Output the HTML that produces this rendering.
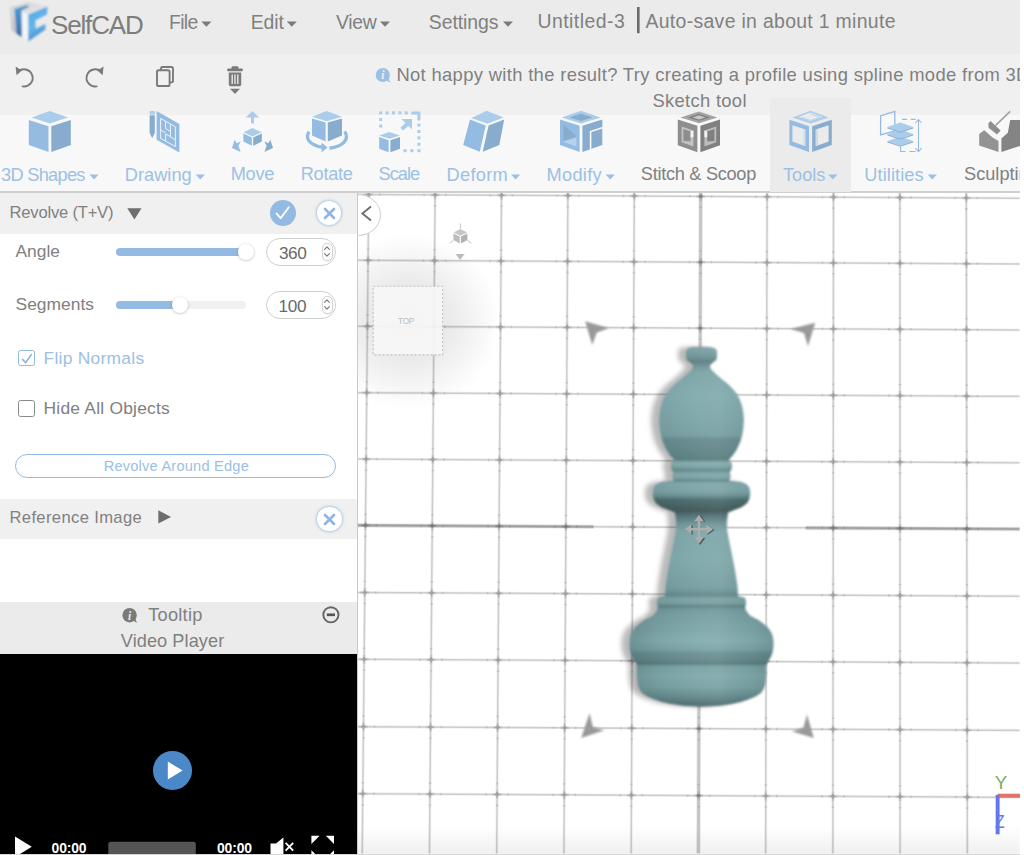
<!DOCTYPE html>
<html lang="en"><head><meta charset="utf-8"><title>SelfCAD</title>
<style>
html,body{margin:0;padding:0;background:#fff;}
body{width:1024px;height:855px;overflow:hidden;font-family:"Liberation Sans",sans-serif;}
#app{position:absolute;left:0;top:0;width:1020px;height:855px;overflow:hidden;background:#fff;}
.t{position:absolute;white-space:nowrap;line-height:1;}
.abs{position:absolute;}
#row1{position:absolute;left:0;top:0;width:1020px;height:54px;background:#ebebeb;}
#row2{position:absolute;left:0;top:54px;width:1020px;height:61px;background:#f0f0f0;}
#toolbar{position:absolute;left:0;top:114.5px;width:1020px;height:76.5px;background:#f8f8f9;}
#tbborder{position:absolute;left:0;top:190.7px;width:1020px;height:2.6px;background:#cfcfcf;}
#toolsactive{position:absolute;left:769.5px;top:97.5px;width:81.5px;height:94.3px;background:#ebebeb;}
#labels{position:absolute;left:0;top:0;width:1020px;height:855px;}
#clipline{position:absolute;left:0;top:54px;width:1020px;height:44px;overflow:hidden;}
#clipline .t{margin-top:-54px;}
#cliptb{position:absolute;left:0;top:150px;width:1020px;height:40px;overflow:hidden;}
#cliptb .t{margin-top:-150px;}
svg{position:absolute;overflow:visible;}
.closebtn{width:24.6px;height:24.6px;border-radius:50%;background:#fff;box-shadow:0 0 2.5px 1px rgba(146,186,226,.75);}
.thumb{width:15.4px;height:15.4px;border-radius:50%;background:#fff;box-shadow:0 0.5px 2.5px rgba(0,0,0,.28);}
.numbox{width:67.6px;height:25.8px;border:1.4px solid #cfcfcf;border-radius:15px;background:#fff;}
.spin{width:8.6px;height:15.8px;border:0.9px solid #d4d4d4;border-radius:5px;background:#fff;box-shadow:0 0.5px 1px rgba(0,0,0,.1);}

</style></head>
<body>
<div id="app">
<div id="row1"></div>
<div id="row2"></div>
<div id="toolbar"></div>
<div id="tbborder"></div>
<div id="toolsactive"></div>

<div id="icons">
<!-- logo -->
<svg style="left:0;top:0" width="60" height="50" viewBox="0 0 60 50">
  <defs>
    <linearGradient id="lgTop" x1="0" y1="0" x2="1" y2="1"><stop offset="0" stop-color="#c9c9c9"/><stop offset="1" stop-color="#f0f0f0"/></linearGradient>
    <linearGradient id="lgL" x1="0" y1="0" x2="0" y2="1"><stop offset="0" stop-color="#dcdcdc"/><stop offset="1" stop-color="#b4b4b4"/></linearGradient>
    <linearGradient id="lgB1" x1="0" y1="0" x2="0" y2="1"><stop offset="0" stop-color="#4f9ad6"/><stop offset=".55" stop-color="#3f86c2"/><stop offset="1" stop-color="#2f6ea6"/></linearGradient>
    <linearGradient id="lgB2" x1="0" y1="0" x2="0.3" y2="1"><stop offset="0" stop-color="#56a6e2"/><stop offset=".6" stop-color="#64b8ea"/><stop offset="1" stop-color="#4a8fd0"/></linearGradient>
    <filter id="lblur" x="-10%" y="-10%" width="120%" height="120%"><feGaussianBlur stdDeviation="0.9"/></filter>
  </defs>
  <g filter="url(#lblur)">
    <path d="M9.4 7.2L28.2 2.2L47.6 6.6L28.2 14.4Z" fill="url(#lgTop)"/>
    <path d="M9.4 7.2L28.2 14.4V41.6L11.8 30.4Z" fill="url(#lgL)"/>
    <path d="M21.6 11.4L28.2 14.4V41.6L21.9 37.4Z" fill="#f4f4f4"/>
    <path d="M14.4 8.9L27.6 5L28.4 7.4L21.3 10.4L22 37.3L16.6 33.6Z" fill="url(#lgB1)"/>
    <path d="M28.2 14.4L47.6 6.6L46.9 14.4L35.8 20.4V28.2L45.4 23.4V29.4L28.2 41.4Z" fill="url(#lgB2)"/>
    <path d="M35.8 20.4L45.6 16.8L45.4 23.4L35.8 28.2Z" fill="#ececec"/>
  </g>
</svg>
<!-- menu carets -->
<svg style="left:0;top:0" width="1020" height="54" viewBox="0 0 1020 54">
  <g fill="#7b7b7b">
    <path d="M201.4 21.6H211.4L206.4 26.8Z"/>
    <path d="M286.8 21.6H296.8L291.8 26.8Z"/>
    <path d="M380 21.6H390L385 26.8Z"/>
    <path d="M503 21.6H513L508 26.8Z"/>
  </g>
  <rect x="637" y="7" width="2.6" height="26.2" fill="#6a6a6a"/>
</svg>
<!-- row2 icons -->
<svg style="left:0;top:54px" width="1020" height="61" viewBox="0 54 1020 61">
  <g fill="none" stroke="#7a7a7a" stroke-width="1.9" stroke-linecap="round" stroke-linejoin="round">
    <!-- undo -->
    <path d="M17.6 72.2A8.6 8.6 0 1 1 22.6 86.4"/>
    <!-- redo -->
    <path d="M101.6 72.2A8.6 8.6 0 1 0 96.6 86.4"/>
    <!-- copy -->
    <rect x="157" y="70.2" width="12.6" height="15.8" rx="1.6"/>
    <path d="M161 70V68.4Q161 67 162.4 67H171.6Q173 67 173 68.4V81Q173 82.4 171.6 82.4H170"/>
  </g>
  <path d="M15.6 66.4L21.8 70.6L16.6 75.2Z M103.6 66.4L97.4 70.6L102.6 75.2Z" fill="#7a7a7a"/>
  <!-- trash -->
  <g fill="#7a7a7a">
    <rect x="227.2" y="68.6" width="15.6" height="2.6" rx="0.8"/>
    <rect x="231.6" y="66.2" width="6.8" height="3" rx="1"/>
    <path d="M228.8 72.4H241.2V84.6Q241.2 86.2 239.6 86.2H230.4Q228.8 86.2 228.8 84.6Z"/>
    <path d="M230 88.8H240L235 94Z"/>
  </g>
  <g stroke="#f0f0f0" stroke-width="1.3"><path d="M232.2 74.4V84M235 74.4V84M237.8 74.4V84"/></g>
  <!-- info -->
  <circle cx="382.8" cy="75" r="7.1" fill="#9cc0e4"/>
  <path d="M386.4 80Q388.6 82.6 390.8 82.4Q388.8 81 388.8 78Z" fill="#9cc0e4"/>
  <text x="382.9" y="79.4" text-anchor="middle" font-family="Liberation Serif, serif" font-style="italic" font-weight="bold" font-size="11.5" fill="#f0f0f0">i</text>
</svg>
<!-- toolbar carets -->
<svg style="left:0;top:160px" width="1020" height="30" viewBox="0 160 1020 30">
  <g fill="#9cc0e4">
    <path d="M89.5 174.6H98.7L94.1 179.4Z"/>
    <path d="M195.7 174.6H204.9L200.3 179.4Z"/>
    <path d="M511 174.6H520.2L515.6 179.4Z"/>
    <path d="M605.6 174.6H614.8L610.2 179.4Z"/>
    <path d="M828.2 174.6H837.4L832.8 179.4Z"/>
    <path d="M927.7 174.6H936.9L932.3 179.4Z"/>
  </g>
</svg>
<!-- toolbar icons -->
<svg id="tbicons" style="left:0;top:105px" width="1020" height="55" viewBox="0 105 1020 55">
  <!-- 3D Shapes cube -->
  <path d="M49.6 111.1L68.1 117.5L49.6 123.4L31.6 117.5Z" fill="#aacdec"/>
  <path d="M28.8 119.9L48.5 126.3V152L28.8 145Z" fill="#94bbe2"/>
  <path d="M51.3 126.3L70.8 119.9V145L51.3 152Z" fill="#88acce"/>
  <!-- Drawing -->
  <path d="M149.6 114.6V112.2Q149.6 111 150.8 111H153.6Q154.8 111 154.8 112.2V114.6Z" fill="#aacdec"/>
  <path d="M149.6 115.2H154.8V133L152.2 138.2L149.6 133Z" fill="#88acce"/>
  <path d="M156.6 111L179.4 124V152.4L156.6 139.8Z" fill="#94bbe2"/>
  <g fill="none" stroke="#f8f8f9" stroke-width="0.9">
    <path d="M160.6 118.4L175.4 126.8V146.6L160.6 138.4Z"/>
    <path d="M165.6 121.4V128.6L170.4 131.4M170.4 124.2V136.6M160.6 130L165.6 132.8M170.4 136.6L165.6 134V141.2M170.4 137L175.4 139.8"/>
  </g>
  <!-- Move -->
  <path d="M252.4 111L259.4 117.6H254V123.4H251V117.6H245.6Z" fill="#aacdec"/>
  <path d="M252.5 128L261.6 132.3L252.5 136.4L243.6 132.3Z" fill="#aacdec"/>
  <path d="M243.4 133.6L251.8 137.4V145.8L243.4 141.6Z" fill="#94bbe2"/>
  <path d="M253.2 137.4L261.8 133.6V141.6L253.2 145.8Z" fill="#88acce"/>
  <path d="M232 148L234.6 139.8L236.6 143.2L240.6 141.6L238.4 145.8L240.6 152Z" fill="#94bbe2"/>
  <path d="M273 148L270.4 139.8L268.4 143.2L264.4 141.6L266.6 145.8L264.4 152Z" fill="#88acce"/>
  <!-- Rotate -->
  <path d="M326.6 111L342 116.8L326.6 121.2L312 116.8Z" fill="#aacdec"/>
  <path d="M312 118.6L325.6 122.6V141.6L312 135.6Z" fill="#94bbe2"/>
  <path d="M327.8 122.6L342 118.6V135.6L327.8 141.6Z" fill="#88acce"/>
  <path d="M309 131.6Q304.6 138.6 312 143.6Q317 146.8 324 147.4" fill="none" stroke="#94bbe2" stroke-width="3.2"/>
  <path d="M321.6 142.4L327.6 147.4L321.6 152.2Z" fill="#94bbe2"/>
  <path d="M329.4 148.2Q340 147 344.6 141.6Q348.4 136.4 344.6 131.4" fill="none" stroke="#94bbe2" stroke-width="3.2"/>
  <!-- Scale -->
  <g fill="#aacdec">
    <rect x="379.2" y="111.4" width="3" height="3"/><rect x="385.6" y="111.4" width="3" height="3"/><rect x="392" y="111.4" width="3" height="3"/><rect x="398.4" y="111.4" width="3" height="3"/><rect x="404.8" y="111.4" width="3" height="3"/>
    <path d="M411.4 111.4H420.4V120.4H417.4V114.4H411.4Z"/>
    <rect x="379.2" y="118" width="3" height="3"/><rect x="379.2" y="124.6" width="3" height="3"/>
    <rect x="417.4" y="123.6" width="3" height="3"/><rect x="417.4" y="130" width="3" height="3"/><rect x="417.4" y="136.4" width="3" height="3"/><rect x="417.4" y="142.8" width="3" height="3"/><rect x="417.4" y="149.2" width="3" height="3"/>
    <rect x="403.6" y="149.2" width="3" height="3"/><rect x="410.4" y="149.2" width="3" height="3"/>
    <path d="M401.2 119H412V129.6L408.4 126L403 130.6L400.4 127.8L405.4 122.8Z"/>
  </g>
  <path d="M389.4 132L400 135.4L389.4 138.8L379.2 135.4Z" fill="#aacdec"/>
  <path d="M379.2 137L388.6 140.2V152.3L379.2 148.8Z" fill="#94bbe2"/>
  <path d="M390.4 140.2L400 137V148.8L390.4 152.3Z" fill="#88acce"/>
  <!-- Deform -->
  <path d="M471.4 118L486.6 110.8L503.8 117.6L487.4 123.8Z" fill="#aacdec"/>
  <path d="M470 119.6L485.7 125.6L479.8 151.8L463.2 145Z" fill="#94bbe2"/>
  <path d="M488.6 125.6L504.2 119.6L499.3 145L482.7 151.8Z" fill="#88acce"/>
  <!-- Modify -->
  <path d="M581 110.8L600.8 117.4L581 123.6L561.6 117.4Z" fill="#aacdec"/>
  <path d="M581 113.4L592.6 117.4L581 121L569.6 117.4Z" fill="#88acce"/>
  <path d="M560 119.6L579.6 125.8V152L560 145Z" fill="#94bbe2"/>
  <path d="M563.4 124.4L576.4 136.2L563.4 140.6Z" fill="#88acce"/>
  <path d="M563.4 141.8L576.4 137.4V146.6Z" fill="#b4d3ee"/>
  <path d="M582.4 125.8L602.3 119.6V145L582.4 152Z" fill="#88acce"/>
  <path d="M602.3 127.8L590.6 131.6V149.6" fill="none" stroke="#f8f8f9" stroke-width="1.6"/>
  <!-- Stitch & Scoop -->
  <g>
    <path d="M699 111.4L717.4 117.4L699 123.2L680.4 117.4Z" fill="#a4a4a4"/>
    <path d="M699 113.8L710 117.4L699 120.8L688 117.4Z" fill="#7e7e7e"/>
    <path d="M699 115.2L705.6 117.4L699 119.6L692.4 117.4Z" fill="#c9c9c9"/>
    <path d="M677.8 119.6L697.4 125.8V152.2L677.8 145.2Z" fill="#8e8e8e"/>
    <path d="M681.6 126.6L693.4 130.4V146.4L681.6 142.2Z" fill="#c4c4c4"/>
    <path d="M683.4 129L690.6 131.4V141.4L683.4 141Z" fill="#8e8e8e"/>
    <path d="M690.6 131.4L693.4 130.4V137L690.6 137.6Z" fill="#f4f4f4"/>
    <path d="M700.4 125.8L720 119.6V145.2L700.4 152.2Z" fill="#808080"/>
    <path d="M704.4 130.4L716.2 126.6V142.2L704.4 146.4Z" fill="#bdbdbd"/>
    <path d="M707.2 131.4L714.4 129V141L707.2 141.4Z" fill="#808080"/>
    <path d="M704.4 130.4L707.2 131.4V137.6L704.4 137Z" fill="#f4f4f4"/>
  </g>
  <!-- Tools -->
  <path d="M810.6 110.8L828.4 117.4L810.6 123.4L792.4 117.4Z" fill="#aacdec"/>
  <path d="M810.6 112.6L822.6 117L810.6 121L798.4 117Z" fill="#ebebeb"/>
  <path d="M810.6 113.8L820 117.4L810.6 120.4L801.2 117.4" fill="none" stroke="#aacdec" stroke-width="0.8"/>
  <path d="M789.4 119.8L809 126.2V152L789.4 145Z" fill="#94bbe2"/>
  <path d="M792.4 125.2L805.4 129.6V146.2L792.4 141.6Z" fill="#ebebeb"/>
  <path d="M804 129.4V145.4" stroke="#b8d4ee" stroke-width="0.9"/>
  <path d="M812.2 126.2L831.8 119.8V145L812.2 152Z" fill="#88acce"/>
  <path d="M815.6 129.6L828.6 125.2V141.6L815.6 146.2Z" fill="#ebebeb"/>
  <path d="M817 129.4V145.4" stroke="#a9c6e2" stroke-width="0.9"/>
  <!-- Utilities -->
  <path d="M880.6 115.8L894.8 111.5V131L880.6 134.9Z" fill="none" stroke="#94bbe2" stroke-width="1.3"/>
  <g fill="#aacdec">
    <path d="M900.4 122.4L913.2 127L900.4 131.4L887.4 127Z"/>
    <path d="M900.4 129.6L913.2 134L900.4 138.4L887.4 134Z"/>
    <path d="M900.4 136.6L913.2 141L900.4 145.4L887.4 141Z"/>
  </g>
  <g fill="#8fb5da">
    <path d="M887.4 127L900.4 131.4L913.2 127V128.4L900.4 132.8L887.4 128.4Z"/>
    <path d="M887.4 134L900.4 138.4L913.2 134V135.4L900.4 139.8L887.4 135.4Z"/>
    <path d="M887.4 141L900.4 145.4L913.2 141V142.4L900.4 146.8L887.4 142.4Z"/>
  </g>
  <g fill="none" stroke="#94bbe2" stroke-width="1.1">
    <path d="M902 119.4H907M910.6 119.4H915.6"/>
    <path d="M900.6 146.4V151.5H905.6M909.4 151.5H915.6"/>
    <path d="M918.5 120V151"/>
    <path d="M915.4 123L918.5 119.6L921.6 123M915.4 148.2L918.5 151.6L921.6 148.2"/>
  </g>
  <!-- Sculpting -->
  <g fill="#8a8a8a">
    <path d="M979.2 134L984.2 130.2L992.6 137.4L998.5 141V152L979.2 145.6Z" fill="#939393"/>
    <path d="M1001.4 138.6L1007.8 132.7L1010.2 120H1021V145.6L1001.4 152Z" fill="#848484"/>
    <path d="M988.4 123.4L990.6 121L1000.6 130.4L997 134.6L988.6 127.8Z" fill="#8e8e8e"/>
  </g>
  <path d="M995.6 125.4L1010.2 111.4" stroke="#a0a0a0" stroke-width="1.5"/>
</svg>
</div>

<div id="panel">
  <div class="abs" style="left:0;top:193.3px;width:357px;height:40.4px;background:#f0f0f0;"></div>
  <!-- header triangle -->
  <svg style="left:127px;top:208px" width="15" height="12" viewBox="0 0 15 12"><path d="M0.3 0.2H14.5L7.4 11.6Z" fill="#6e6e6e"/></svg>
  <!-- confirm button -->
  <div class="abs" style="left:269.8px;top:200.3px;width:25.8px;height:25.8px;border-radius:50%;background:#92bae2;"></div>
  <svg style="left:269.8px;top:200.3px" width="26" height="26" viewBox="0 0 26 26"><path d="M6.6 13.6L10.6 18.2L18.8 7.2" fill="none" stroke="#fff" stroke-width="1.9" stroke-linecap="round" stroke-linejoin="round"/></svg>
  <!-- close button -->
  <div class="abs closebtn" style="left:316.6px;top:200.6px;"></div>
  <svg style="left:316.6px;top:200.6px" width="25" height="25" viewBox="0 0 25 25"><path d="M8 8L17 17M17 8L8 17" fill="none" stroke="#8db7e2" stroke-width="2.6" stroke-linecap="round"/></svg>

  <!-- slider 1 -->
  <div class="abs" style="left:115.5px;top:248px;width:136px;height:8px;border-radius:4px;background:#92bae2;"></div>
  <div class="abs thumb" style="left:238.4px;top:244.4px;"></div>
  <div class="abs numbox" style="left:266.2px;top:238.3px;"></div>
  <div class="abs spin" style="left:322.4px;top:243.4px;"></div>
  <svg style="left:322.4px;top:243.4px" width="10" height="17" viewBox="0 0 10 17"><path d="M2.6 6.4L5 3.8L7.4 6.4M2.6 10.6L5 13.2L7.4 10.6" fill="none" stroke="#777" stroke-width="1.1" stroke-linecap="round" stroke-linejoin="round"/></svg>
  <!-- slider 2 -->
  <div class="abs" style="left:115.5px;top:301px;width:130px;height:8px;border-radius:4px;background:#f0f0f0;"></div>
  <div class="abs" style="left:115.5px;top:301px;width:66px;height:8px;border-radius:4px;background:#92bae2;"></div>
  <div class="abs thumb" style="left:172.4px;top:297.4px;"></div>
  <div class="abs numbox" style="left:266.2px;top:291.3px;"></div>
  <div class="abs spin" style="left:322.4px;top:296.4px;"></div>
  <svg style="left:322.4px;top:296.4px" width="10" height="17" viewBox="0 0 10 17"><path d="M2.6 6.4L5 3.8L7.4 6.4M2.6 10.6L5 13.2L7.4 10.6" fill="none" stroke="#777" stroke-width="1.1" stroke-linecap="round" stroke-linejoin="round"/></svg>

  <!-- checkbox 1 -->
  <div class="abs" style="left:18px;top:349.5px;width:14.5px;height:14.5px;border:1.6px solid #92bae2;border-radius:2.5px;background:#fff;"></div>
  <svg style="left:18px;top:349.5px" width="18" height="18" viewBox="0 0 18 18"><path d="M4.6 9.4L7.6 12.8L13.2 4.8" fill="none" stroke="#8db7e2" stroke-width="1.7" stroke-linecap="round" stroke-linejoin="round"/></svg>
  <!-- checkbox 2 -->
  <div class="abs" style="left:18px;top:400px;width:14.5px;height:14.5px;border:1.6px solid #8a8a8a;border-radius:2.5px;background:#fff;"></div>

  <!-- revolve around edge -->
  <div class="abs" style="left:14.8px;top:454px;width:319.4px;height:22px;border:1.4px solid #92bae2;border-radius:13px;background:#fff;"></div>

  <!-- reference image -->
  <div class="abs" style="left:0;top:499px;width:357px;height:39.5px;background:#f0f0f0;"></div>
  <svg style="left:158px;top:510px" width="14" height="14" viewBox="0 0 14 14"><path d="M0.3 0.2V13.6L13 6.9Z" fill="#6e6e6e"/></svg>
  <div class="abs closebtn" style="left:317px;top:506.5px;"></div>
  <svg style="left:317px;top:506.5px" width="25" height="25" viewBox="0 0 25 25"><path d="M8 8L17 17M17 8L8 17" fill="none" stroke="#8db7e2" stroke-width="2.6" stroke-linecap="round"/></svg>

  <!-- tooltip bar -->
  <div class="abs" style="left:0;top:602.2px;width:357px;height:51.8px;background:#ebebeb;"></div>
  <svg style="left:122.3px;top:608.3px" width="16" height="16" viewBox="0 0 16 16"><circle cx="7.6" cy="7.2" r="7.2" fill="#7a7a7a"/><path d="M11 12.2Q13.5 14.8 15.6 14.6Q13.6 13.4 13.4 10.4Z" fill="#7a7a7a"/><text x="7.7" y="11.6" text-anchor="middle" font-family="Liberation Serif, serif" font-style="italic" font-weight="bold" font-size="11.5" fill="#ebebeb">i</text></svg>
  <svg style="left:322.2px;top:606.4px" width="18" height="18" viewBox="0 0 18 18"><circle cx="8.9" cy="8.8" r="7.6" fill="none" stroke="#666" stroke-width="1.9"/><path d="M4.8 8.8H13" stroke="#555" stroke-width="2.7"/></svg>

  <!-- video -->
  <div class="abs" style="left:0;top:654px;width:357px;height:199.7px;background:#000;"></div>
  <div class="abs" style="left:153px;top:751px;width:38.6px;height:38.6px;border-radius:50%;background:#4b88c7;"></div>
  <svg style="left:153px;top:751px" width="39" height="39" viewBox="0 0 39 39"><path d="M14.8 10.6V28.4L29.6 19.5Z" fill="#fff"/></svg>
  <div id="vclip" class="abs" style="left:0;top:830px;width:357px;height:23.7px;overflow:hidden;">
    <svg style="left:0;top:0" width="357" height="40" viewBox="0 830 357 40">
      <path d="M15 836.6V857L31.8 846.8Z" fill="#fff"/>
      <rect x="108.3" y="841.7" width="87.5" height="14" rx="2.5" fill="#555"/>
      <path d="M270.5 843.5H276L283.4 837.6V858H276H270.5Z" fill="#fff"/>
      <path d="M285.6 842.8L293.2 850.6M293.2 842.8L285.6 850.6" stroke="#fff" stroke-width="1.8" fill="none"/>
      <path d="M311.4 835.8H319.6L311.4 844Z M334 835.8H325.8L334 844Z M311.4 858.4H319.6L311.4 850.2Z M334 858.4H325.8L334 850.2Z" fill="#fff"/>
    </svg>
  </div>
  <div class="abs" style="left:0;top:853.7px;width:1020px;height:1.3px;background:#d6d6d6;"></div>
  <!-- panel right border -->
  <div class="abs" style="left:356.8px;top:193.3px;width:1.6px;height:661px;background:#c9c9c9;"></div>
</div>

<div id="viewport" class="abs" style="left:358.4px;top:193.3px;width:661.6px;height:660.4000000000001px;overflow:hidden;background:#fff;">
<svg style="left:0;top:0" width="661.6" height="660.4000000000001" viewBox="358.4 193.3 661.6 660.4000000000001">
<defs>
<radialGradient id="vcsh" cx="0.5" cy="0.5" r="0.5"><stop offset="0" stop-color="#000" stop-opacity="0.115"/><stop offset="0.45" stop-color="#000" stop-opacity="0.08"/><stop offset="1" stop-color="#000" stop-opacity="0"/></radialGradient>
<linearGradient id="botfade" x1="0" y1="0" x2="0" y2="1"><stop offset="0" stop-color="#000" stop-opacity="0"/><stop offset="1" stop-color="#000" stop-opacity="0.06"/></linearGradient>
<filter id="gblur" x="-5%" y="-5%" width="110%" height="110%"><feGaussianBlur stdDeviation="1"/></filter>
<filter id="ablur" x="-20%" y="-20%" width="140%" height="140%"><feGaussianBlur stdDeviation="1"/></filter>
<filter id="shblur" x="-30%" y="-10%" width="160%" height="120%"><feGaussianBlur stdDeviation="2.4"/></filter>
<filter id="bblur" x="-5%" y="-5%" width="110%" height="110%"><feGaussianBlur stdDeviation="1"/></filter>
</defs>
<g>
<path d="M358.40 194.77L1020.00 198.47M358.40 260.57L1020.00 264.27M358.40 326.57L1020.00 330.27M358.40 392.97L1020.00 396.67M358.40 459.37L1020.00 463.07M358.40 525.67L1020.00 529.37M358.40 592.77L1020.00 596.47M358.40 659.57L1020.00 663.27M358.40 726.97L1020.00 730.67M358.40 793.97L1020.00 797.67M369.12 193.30L362.62 853.70M435.51 193.30L429.85 853.70M501.91 193.30L497.09 853.70M568.31 193.30L564.33 853.70M634.71 193.30L631.56 853.70M767.50 193.30L766.04 853.70M833.90 193.30L833.27 853.70M900.30 193.30L900.51 853.70M966.70 193.30L967.75 853.70" fill="none" stroke="#000" stroke-opacity="0.055" stroke-width="3.1"/>
<path d="M358.40 194.77L1020.00 198.47M358.40 260.57L1020.00 264.27M358.40 326.57L1020.00 330.27M358.40 392.97L1020.00 396.67M358.40 459.37L1020.00 463.07M358.40 525.67L1020.00 529.37M358.40 592.77L1020.00 596.47M358.40 659.57L1020.00 663.27M358.40 726.97L1020.00 730.67M358.40 793.97L1020.00 797.67M369.12 193.30L362.62 853.70M435.51 193.30L429.85 853.70M501.91 193.30L497.09 853.70M568.31 193.30L564.33 853.70M634.71 193.30L631.56 853.70M767.50 193.30L766.04 853.70M833.90 193.30L833.27 853.70M900.30 193.30L900.51 853.70M966.70 193.30L967.75 853.70" fill="none" stroke="#000" stroke-opacity="0.15" stroke-width="1.5"/>
<path d="M701.11 193.30L698.80 853.70M358.40 525.67L594.00 526.99M806.00 528.17L1020.00 529.37" fill="none" stroke="#000" stroke-opacity="0.06" stroke-width="4.8"/>
<path d="M701.11 193.30L698.80 853.70M358.40 525.67L594.00 526.99M806.00 528.17L1020.00 529.37" fill="none" stroke="#000" stroke-opacity="0.17" stroke-width="3.1"/>
<path d="M364.5 194.8H373.7M369.1 190.2V199.4M430.9 195.2H440.1M435.5 190.6V199.8M497.3 195.6H506.5M501.9 191.0V200.2M563.7 195.9H572.9M568.3 191.3V200.5M630.1 196.3H639.3M634.7 191.7V200.9M696.5 196.7H705.7M701.1 192.1V201.3M762.9 197.1H772.1M767.5 192.5V201.7M829.3 197.4H838.5M833.9 192.8V202.0M895.7 197.8H904.9M900.3 193.2V202.4M962.1 198.2H971.3M966.7 193.6V202.8M363.9 260.6H373.1M368.5 256.0V265.2M430.3 261.0H439.5M434.9 256.4V265.6M496.8 261.4H506.0M501.4 256.8V266.0M563.3 261.7H572.5M567.9 257.1V266.3M629.8 262.1H639.0M634.4 257.5V266.7M696.3 262.5H705.5M700.9 257.9V267.1M762.8 262.9H772.0M767.4 258.3V267.5M829.2 263.2H838.4M833.8 258.6V267.8M895.7 263.6H904.9M900.3 259.0V268.2M962.2 264.0H971.4M966.8 259.4V268.6M363.2 326.6H372.4M367.8 322.0V331.2M429.8 327.0H439.0M434.4 322.4V331.6M496.3 327.4H505.5M500.9 322.8V332.0M562.9 327.7H572.1M567.5 323.1V332.3M629.5 328.1H638.7M634.1 323.5V332.7M696.0 328.5H705.2M700.6 323.9V333.1M762.6 328.9H771.8M767.2 324.3V333.5M829.2 329.2H838.4M833.8 324.6V333.8M895.7 329.6H904.9M900.3 325.0V334.2M962.3 330.0H971.5M966.9 325.4V334.6M362.5 393.0H371.7M367.1 388.4V397.6M429.2 393.4H438.4M433.8 388.8V398.0M495.9 393.8H505.1M500.5 389.2V398.4M562.5 394.1H571.7M567.1 389.5V398.7M629.2 394.5H638.4M633.8 389.9V399.1M695.8 394.9H705.0M700.4 390.3V399.5M762.5 395.3H771.7M767.1 390.7V399.9M829.1 395.6H838.3M833.7 391.0V400.2M895.8 396.0H905.0M900.4 391.4V400.6M962.4 396.4H971.6M967.0 391.8V401.0M361.9 459.4H371.1M366.5 454.8V464.0M428.6 459.8H437.8M433.2 455.2V464.4M495.4 460.2H504.6M500.0 455.6V464.8M562.1 460.5H571.3M566.7 455.9V465.1M628.8 460.9H638.0M633.4 456.3V465.5M695.6 461.3H704.8M700.2 456.7V465.9M762.3 461.7H771.5M766.9 457.1V466.3M829.0 462.0H838.2M833.6 457.4V466.6M895.8 462.4H905.0M900.4 457.8V467.0M962.5 462.8H971.7M967.1 458.2V467.4M361.2 525.7H370.4M365.8 521.1V530.3M428.1 526.1H437.3M432.7 521.5V530.7M494.9 526.5H504.1M499.5 521.9V531.1M561.7 526.8H570.9M566.3 522.2V531.4M628.5 527.2H637.7M633.1 522.6V531.8M695.3 527.6H704.5M699.9 523.0V532.2M762.2 528.0H771.4M766.8 523.4V532.6M829.0 528.3H838.2M833.6 523.7V532.9M895.8 528.7H905.0M900.4 524.1V533.3M962.6 529.1H971.8M967.2 524.5V533.7M360.6 592.8H369.8M365.2 588.2V597.4M427.5 593.2H436.7M432.1 588.6V597.8M494.4 593.6H503.6M499.0 589.0V598.2M561.3 593.9H570.5M565.9 589.3V598.5M628.2 594.3H637.4M632.8 589.7V598.9M695.1 594.7H704.3M699.7 590.1V599.3M762.0 595.1H771.2M766.6 590.5V599.7M828.9 595.4H838.1M833.5 590.8V600.0M895.8 595.8H905.0M900.4 591.2V600.4M962.7 596.2H971.9M967.3 591.6V600.8M359.9 659.6H369.1M364.5 655.0V664.2M426.9 660.0H436.1M431.5 655.4V664.6M493.9 660.4H503.1M498.5 655.8V665.0M560.9 660.7H570.1M565.5 656.1V665.3M627.9 661.1H637.1M632.5 656.5V665.7M694.9 661.5H704.1M699.5 656.9V666.1M761.9 661.9H771.1M766.5 657.3V666.5M828.9 662.2H838.1M833.5 657.6V666.8M895.8 662.6H905.0M900.4 658.0V667.2M962.8 663.0H972.0M967.4 658.4V667.6M359.3 727.0H368.5M363.9 722.4V731.6M426.3 727.4H435.5M430.9 722.8V732.0M493.4 727.7H502.6M498.0 723.1V732.3M560.5 728.1H569.7M565.1 723.5V732.7M627.6 728.5H636.8M632.2 723.9V733.1M694.6 728.9H703.8M699.2 724.3V733.5M761.7 729.3H770.9M766.3 724.7V733.9M828.8 729.6H838.0M833.4 725.0V734.2M895.9 730.0H905.1M900.5 725.4V734.6M962.9 730.4H972.1M967.5 725.8V735.0M358.6 794.0H367.8M363.2 789.4V798.6M425.8 794.4H435.0M430.4 789.8V799.0M492.9 794.7H502.1M497.5 790.1V799.3M560.1 795.1H569.3M564.7 790.5V799.7M627.2 795.5H636.4M631.8 790.9V800.1M694.4 795.9H703.6M699.0 791.3V800.5M761.6 796.3H770.8M766.2 791.7V800.9M828.7 796.6H837.9M833.3 792.0V801.2M895.9 797.0H905.1M900.5 792.4V801.6M963.1 797.4H972.3M967.7 792.8V802.0" fill="none" stroke="#000" stroke-opacity="0.07" stroke-width="3"/>
<path d="M366.7 194.8H371.5M369.1 192.4V197.2M433.1 195.2H437.9M435.5 192.8V197.6M499.5 195.6H504.3M501.9 193.2V198.0M565.9 195.9H570.7M568.3 193.5V198.3M632.3 196.3H637.1M634.7 193.9V198.7M698.7 196.7H703.5M701.1 194.3V199.1M765.1 197.1H769.9M767.5 194.7V199.5M831.5 197.4H836.3M833.9 195.0V199.8M897.9 197.8H902.7M900.3 195.4V200.2M964.3 198.2H969.1M966.7 195.8V200.6M366.1 260.6H370.9M368.5 258.2V263.0M432.5 261.0H437.3M434.9 258.6V263.4M499.0 261.4H503.8M501.4 259.0V263.8M565.5 261.7H570.3M567.9 259.3V264.1M632.0 262.1H636.8M634.4 259.7V264.5M698.5 262.5H703.3M700.9 260.1V264.9M765.0 262.9H769.8M767.4 260.5V265.3M831.4 263.2H836.2M833.8 260.8V265.6M897.9 263.6H902.7M900.3 261.2V266.0M964.4 264.0H969.2M966.8 261.6V266.4M365.4 326.6H370.2M367.8 324.2V329.0M432.0 327.0H436.8M434.4 324.6V329.4M498.5 327.4H503.3M500.9 325.0V329.8M565.1 327.7H569.9M567.5 325.3V330.1M631.7 328.1H636.5M634.1 325.7V330.5M698.2 328.5H703.0M700.6 326.1V330.9M764.8 328.9H769.6M767.2 326.5V331.3M831.4 329.2H836.2M833.8 326.8V331.6M897.9 329.6H902.7M900.3 327.2V332.0M964.5 330.0H969.3M966.9 327.6V332.4M364.7 393.0H369.5M367.1 390.6V395.4M431.4 393.4H436.2M433.8 391.0V395.8M498.1 393.8H502.9M500.5 391.4V396.2M564.7 394.1H569.5M567.1 391.7V396.5M631.4 394.5H636.2M633.8 392.1V396.9M698.0 394.9H702.8M700.4 392.5V397.3M764.7 395.3H769.5M767.1 392.9V397.7M831.3 395.6H836.1M833.7 393.2V398.0M898.0 396.0H902.8M900.4 393.6V398.4M964.6 396.4H969.4M967.0 394.0V398.8M364.1 459.4H368.9M366.5 457.0V461.8M430.8 459.8H435.6M433.2 457.4V462.2M497.6 460.2H502.4M500.0 457.8V462.6M564.3 460.5H569.1M566.7 458.1V462.9M631.0 460.9H635.8M633.4 458.5V463.3M697.8 461.3H702.6M700.2 458.9V463.7M764.5 461.7H769.3M766.9 459.3V464.1M831.2 462.0H836.0M833.6 459.6V464.4M898.0 462.4H902.8M900.4 460.0V464.8M964.7 462.8H969.5M967.1 460.4V465.2M363.4 525.7H368.2M365.8 523.3V528.1M430.3 526.1H435.1M432.7 523.7V528.5M497.1 526.5H501.9M499.5 524.1V528.9M563.9 526.8H568.7M566.3 524.4V529.2M630.7 527.2H635.5M633.1 524.8V529.6M697.5 527.6H702.3M699.9 525.2V530.0M764.4 528.0H769.2M766.8 525.6V530.4M831.2 528.3H836.0M833.6 525.9V530.7M898.0 528.7H902.8M900.4 526.3V531.1M964.8 529.1H969.6M967.2 526.7V531.5M362.8 592.8H367.6M365.2 590.4V595.2M429.7 593.2H434.5M432.1 590.8V595.6M496.6 593.6H501.4M499.0 591.2V596.0M563.5 593.9H568.3M565.9 591.5V596.3M630.4 594.3H635.2M632.8 591.9V596.7M697.3 594.7H702.1M699.7 592.3V597.1M764.2 595.1H769.0M766.6 592.7V597.5M831.1 595.4H835.9M833.5 593.0V597.8M898.0 595.8H902.8M900.4 593.4V598.2M964.9 596.2H969.7M967.3 593.8V598.6M362.1 659.6H366.9M364.5 657.2V662.0M429.1 660.0H433.9M431.5 657.6V662.4M496.1 660.4H500.9M498.5 658.0V662.8M563.1 660.7H567.9M565.5 658.3V663.1M630.1 661.1H634.9M632.5 658.7V663.5M697.1 661.5H701.9M699.5 659.1V663.9M764.1 661.9H768.9M766.5 659.5V664.3M831.1 662.2H835.9M833.5 659.8V664.6M898.0 662.6H902.8M900.4 660.2V665.0M965.0 663.0H969.8M967.4 660.6V665.4M361.5 727.0H366.3M363.9 724.6V729.4M428.5 727.4H433.3M430.9 725.0V729.8M495.6 727.7H500.4M498.0 725.3V730.1M562.7 728.1H567.5M565.1 725.7V730.5M629.8 728.5H634.6M632.2 726.1V730.9M696.8 728.9H701.6M699.2 726.5V731.3M763.9 729.3H768.7M766.3 726.9V731.7M831.0 729.6H835.8M833.4 727.2V732.0M898.1 730.0H902.9M900.5 727.6V732.4M965.1 730.4H969.9M967.5 728.0V732.8M360.8 794.0H365.6M363.2 791.6V796.4M428.0 794.4H432.8M430.4 792.0V796.8M495.1 794.7H499.9M497.5 792.3V797.1M562.3 795.1H567.1M564.7 792.7V797.5M629.4 795.5H634.2M631.8 793.1V797.9M696.6 795.9H701.4M699.0 793.5V798.3M763.8 796.3H768.6M766.2 793.9V798.7M830.9 796.6H835.7M833.3 794.2V799.0M898.1 797.0H902.9M900.5 794.6V799.4M965.3 797.4H970.1M967.7 795.0V799.8" fill="none" stroke="#000" stroke-opacity="0.16" stroke-width="2.2"/>
<path d="M358.1 193.4v2.8M367.7 183.8h2.8M380.1 193.4v2.8M367.7 205.8h2.8M424.5 193.8v2.8M434.1 184.2h2.8M446.5 193.8v2.8M434.1 206.2h2.8M490.9 194.2v2.8M500.5 184.6h2.8M512.9 194.2v2.8M500.5 206.6h2.8M557.3 194.5v2.8M566.9 184.9h2.8M579.3 194.5v2.8M566.9 206.9h2.8M623.7 194.9v2.8M633.3 185.3h2.8M645.7 194.9v2.8M633.3 207.3h2.8M690.1 195.3v2.8M699.7 185.7h2.8M712.1 195.3v2.8M699.7 207.7h2.8M756.5 195.7v2.8M766.1 186.1h2.8M778.5 195.7v2.8M766.1 208.1h2.8M822.9 196.0v2.8M832.5 186.4h2.8M844.9 196.0v2.8M832.5 208.4h2.8M889.3 196.4v2.8M898.9 186.8h2.8M911.3 196.4v2.8M898.9 208.8h2.8M955.7 196.8v2.8M965.3 187.2h2.8M977.7 196.8v2.8M965.3 209.2h2.8M357.5 259.2v2.8M367.1 249.6h2.8M379.5 259.2v2.8M367.1 271.6h2.8M423.9 259.6v2.8M433.5 250.0h2.8M445.9 259.6v2.8M433.5 272.0h2.8M490.4 260.0v2.8M500.0 250.4h2.8M512.4 260.0v2.8M500.0 272.4h2.8M556.9 260.3v2.8M566.5 250.7h2.8M578.9 260.3v2.8M566.5 272.7h2.8M623.4 260.7v2.8M633.0 251.1h2.8M645.4 260.7v2.8M633.0 273.1h2.8M689.9 261.1v2.8M699.5 251.5h2.8M711.9 261.1v2.8M699.5 273.5h2.8M756.4 261.5v2.8M766.0 251.9h2.8M778.4 261.5v2.8M766.0 273.9h2.8M822.8 261.8v2.8M832.4 252.2h2.8M844.8 261.8v2.8M832.4 274.2h2.8M889.3 262.2v2.8M898.9 252.6h2.8M911.3 262.2v2.8M898.9 274.6h2.8M955.8 262.6v2.8M965.4 253.0h2.8M977.8 262.6v2.8M965.4 275.0h2.8M356.8 325.2v2.8M366.4 315.6h2.8M378.8 325.2v2.8M366.4 337.6h2.8M423.4 325.6v2.8M433.0 316.0h2.8M445.4 325.6v2.8M433.0 338.0h2.8M489.9 326.0v2.8M499.5 316.4h2.8M511.9 326.0v2.8M499.5 338.4h2.8M556.5 326.3v2.8M566.1 316.7h2.8M578.5 326.3v2.8M566.1 338.7h2.8M623.1 326.7v2.8M632.7 317.1h2.8M645.1 326.7v2.8M632.7 339.1h2.8M689.6 327.1v2.8M699.2 317.5h2.8M711.6 327.1v2.8M699.2 339.5h2.8M756.2 327.5v2.8M765.8 317.9h2.8M778.2 327.5v2.8M765.8 339.9h2.8M822.8 327.8v2.8M832.4 318.2h2.8M844.8 327.8v2.8M832.4 340.2h2.8M889.3 328.2v2.8M898.9 318.6h2.8M911.3 328.2v2.8M898.9 340.6h2.8M955.9 328.6v2.8M965.5 319.0h2.8M977.9 328.6v2.8M965.5 341.0h2.8M356.1 391.6v2.8M365.7 382.0h2.8M378.1 391.6v2.8M365.7 404.0h2.8M422.8 392.0v2.8M432.4 382.4h2.8M444.8 392.0v2.8M432.4 404.4h2.8M489.5 392.4v2.8M499.1 382.8h2.8M511.5 392.4v2.8M499.1 404.8h2.8M556.1 392.7v2.8M565.7 383.1h2.8M578.1 392.7v2.8M565.7 405.1h2.8M622.8 393.1v2.8M632.4 383.5h2.8M644.8 393.1v2.8M632.4 405.5h2.8M689.4 393.5v2.8M699.0 383.9h2.8M711.4 393.5v2.8M699.0 405.9h2.8M756.1 393.9v2.8M765.7 384.3h2.8M778.1 393.9v2.8M765.7 406.3h2.8M822.7 394.2v2.8M832.3 384.6h2.8M844.7 394.2v2.8M832.3 406.6h2.8M889.4 394.6v2.8M899.0 385.0h2.8M911.4 394.6v2.8M899.0 407.0h2.8M956.0 395.0v2.8M965.6 385.4h2.8M978.0 395.0v2.8M965.6 407.4h2.8M355.5 458.0v2.8M365.1 448.4h2.8M377.5 458.0v2.8M365.1 470.4h2.8M422.2 458.4v2.8M431.8 448.8h2.8M444.2 458.4v2.8M431.8 470.8h2.8M489.0 458.8v2.8M498.6 449.2h2.8M511.0 458.8v2.8M498.6 471.2h2.8M555.7 459.1v2.8M565.3 449.5h2.8M577.7 459.1v2.8M565.3 471.5h2.8M622.4 459.5v2.8M632.0 449.9h2.8M644.4 459.5v2.8M632.0 471.9h2.8M689.2 459.9v2.8M698.8 450.3h2.8M711.2 459.9v2.8M698.8 472.3h2.8M755.9 460.3v2.8M765.5 450.7h2.8M777.9 460.3v2.8M765.5 472.7h2.8M822.6 460.6v2.8M832.2 451.0h2.8M844.6 460.6v2.8M832.2 473.0h2.8M889.4 461.0v2.8M899.0 451.4h2.8M911.4 461.0v2.8M899.0 473.4h2.8M956.1 461.4v2.8M965.7 451.8h2.8M978.1 461.4v2.8M965.7 473.8h2.8M354.8 524.3v2.8M364.4 514.7h2.8M376.8 524.3v2.8M364.4 536.7h2.8M421.7 524.7v2.8M431.3 515.1h2.8M443.7 524.7v2.8M431.3 537.1h2.8M488.5 525.1v2.8M498.1 515.5h2.8M510.5 525.1v2.8M498.1 537.5h2.8M555.3 525.4v2.8M564.9 515.8h2.8M577.3 525.4v2.8M564.9 537.8h2.8M622.1 525.8v2.8M631.7 516.2h2.8M644.1 525.8v2.8M631.7 538.2h2.8M688.9 526.2v2.8M698.5 516.6h2.8M710.9 526.2v2.8M698.5 538.6h2.8M755.8 526.6v2.8M765.4 517.0h2.8M777.8 526.6v2.8M765.4 539.0h2.8M822.6 526.9v2.8M832.2 517.3h2.8M844.6 526.9v2.8M832.2 539.3h2.8M889.4 527.3v2.8M899.0 517.7h2.8M911.4 527.3v2.8M899.0 539.7h2.8M956.2 527.7v2.8M965.8 518.1h2.8M978.2 527.7v2.8M965.8 540.1h2.8M354.2 591.4v2.8M363.8 581.8h2.8M376.2 591.4v2.8M363.8 603.8h2.8M421.1 591.8v2.8M430.7 582.2h2.8M443.1 591.8v2.8M430.7 604.2h2.8M488.0 592.2v2.8M497.6 582.6h2.8M510.0 592.2v2.8M497.6 604.6h2.8M554.9 592.5v2.8M564.5 582.9h2.8M576.9 592.5v2.8M564.5 604.9h2.8M621.8 592.9v2.8M631.4 583.3h2.8M643.8 592.9v2.8M631.4 605.3h2.8M688.7 593.3v2.8M698.3 583.7h2.8M710.7 593.3v2.8M698.3 605.7h2.8M755.6 593.7v2.8M765.2 584.1h2.8M777.6 593.7v2.8M765.2 606.1h2.8M822.5 594.0v2.8M832.1 584.4h2.8M844.5 594.0v2.8M832.1 606.4h2.8M889.4 594.4v2.8M899.0 584.8h2.8M911.4 594.4v2.8M899.0 606.8h2.8M956.3 594.8v2.8M965.9 585.2h2.8M978.3 594.8v2.8M965.9 607.2h2.8M353.5 658.2v2.8M363.1 648.6h2.8M375.5 658.2v2.8M363.1 670.6h2.8M420.5 658.6v2.8M430.1 649.0h2.8M442.5 658.6v2.8M430.1 671.0h2.8M487.5 659.0v2.8M497.1 649.4h2.8M509.5 659.0v2.8M497.1 671.4h2.8M554.5 659.3v2.8M564.1 649.7h2.8M576.5 659.3v2.8M564.1 671.7h2.8M621.5 659.7v2.8M631.1 650.1h2.8M643.5 659.7v2.8M631.1 672.1h2.8M688.5 660.1v2.8M698.1 650.5h2.8M710.5 660.1v2.8M698.1 672.5h2.8M755.5 660.5v2.8M765.1 650.9h2.8M777.5 660.5v2.8M765.1 672.9h2.8M822.5 660.8v2.8M832.1 651.2h2.8M844.5 660.8v2.8M832.1 673.2h2.8M889.4 661.2v2.8M899.0 651.6h2.8M911.4 661.2v2.8M899.0 673.6h2.8M956.4 661.6v2.8M966.0 652.0h2.8M978.4 661.6v2.8M966.0 674.0h2.8M352.9 725.6v2.8M362.5 716.0h2.8M374.9 725.6v2.8M362.5 738.0h2.8M419.9 726.0v2.8M429.5 716.4h2.8M441.9 726.0v2.8M429.5 738.4h2.8M487.0 726.3v2.8M496.6 716.7h2.8M509.0 726.3v2.8M496.6 738.7h2.8M554.1 726.7v2.8M563.7 717.1h2.8M576.1 726.7v2.8M563.7 739.1h2.8M621.2 727.1v2.8M630.8 717.5h2.8M643.2 727.1v2.8M630.8 739.5h2.8M688.2 727.5v2.8M697.8 717.9h2.8M710.2 727.5v2.8M697.8 739.9h2.8M755.3 727.9v2.8M764.9 718.3h2.8M777.3 727.9v2.8M764.9 740.3h2.8M822.4 728.2v2.8M832.0 718.6h2.8M844.4 728.2v2.8M832.0 740.6h2.8M889.5 728.6v2.8M899.1 719.0h2.8M911.5 728.6v2.8M899.1 741.0h2.8M956.5 729.0v2.8M966.1 719.4h2.8M978.5 729.0v2.8M966.1 741.4h2.8M352.2 792.6v2.8M361.8 783.0h2.8M374.2 792.6v2.8M361.8 805.0h2.8M419.4 793.0v2.8M429.0 783.4h2.8M441.4 793.0v2.8M429.0 805.4h2.8M486.5 793.3v2.8M496.1 783.7h2.8M508.5 793.3v2.8M496.1 805.7h2.8M553.7 793.7v2.8M563.3 784.1h2.8M575.7 793.7v2.8M563.3 806.1h2.8M620.8 794.1v2.8M630.4 784.5h2.8M642.8 794.1v2.8M630.4 806.5h2.8M688.0 794.5v2.8M697.6 784.9h2.8M710.0 794.5v2.8M697.6 806.9h2.8M755.2 794.9v2.8M764.8 785.3h2.8M777.2 794.9v2.8M764.8 807.3h2.8M822.3 795.2v2.8M831.9 785.6h2.8M844.3 795.2v2.8M831.9 807.6h2.8M889.5 795.6v2.8M899.1 786.0h2.8M911.5 795.6v2.8M899.1 808.0h2.8M956.7 796.0v2.8M966.3 786.4h2.8M978.7 796.0v2.8M966.3 808.4h2.8" fill="none" stroke="#000" stroke-opacity="0.09" stroke-width="1.6"/>
</g>
<rect x="358.4" y="826" width="661.6" height="28" fill="url(#botfade)"/>
<ellipse cx="409" cy="322" rx="92" ry="88" fill="url(#vcsh)"/>
<rect x="373.6" y="286.6" width="69.4" height="68.6" fill="#f6f6f6" fill-opacity="0.93" stroke="#c4c4c4" stroke-width="1.1" stroke-dasharray="2.2 1.8"/>
<g fill="#bcbcbc" stroke="none">
<path d="M460.8 229.4L467.6 232.8L460.8 236L454 232.8Z" fill="#c6c6c6"/>
<path d="M453.8 233.8L460.2 236.9V243.8L453.8 240.4Z"/>
<path d="M461.4 236.9L467.8 233.8V240.4L461.4 243.8Z" fill="#b2b2b2"/>
<path d="M456 254.2H465L460.5 260.4Z"/>
</g>
<g stroke="#c2c2c2" stroke-width="1" fill="none"><path d="M460.8 223.8V229M453.8 240.6L450 243.6M467.8 240.6L471.8 243.6"/></g>
<g fill="#999999" filter="url(#ablur)">
<path d="M585.6 321.6L609.2 328.6L597.2 332.8L592.6 345.4Z"/>
<path d="M815.6 323L791 329.2L804.4 333.2L808.4 346.6Z"/>
<path d="M590 713.4L581.6 738.4L604.8 730.6L593.2 727.4Z"/>
<path d="M807.4 714.8L814.2 738.4L792 731.6L803.8 728Z"/>
</g>
<rect x="998" y="794" width="22.4" height="4" fill="#e17465"/>
<rect x="996.1" y="795.2" width="3.9" height="39.4" fill="#6676ee"/>
<text x="995.4" y="828.4" font-family="Liberation Sans, sans-serif" font-size="18" fill="#6676ee" textLength="9.6" lengthAdjust="spacingAndGlyphs">Z</text>
<path d="M693.9 347.2L702.9 347.4L707.5 348.6L709.3 351.0L709.5 357.0L708.5 360.5L705.1 363.0L702.7 365.4L702.3 367.6L703.9 370.0L708.7 374.8L714.9 380.0L720.9 384.7L725.9 390.0L729.5 394.6L732.3 400.0L734.7 407.0L735.9 414.5L736.3 420.5L735.9 427.0L734.9 434.4L732.7 442.0L728.9 450.3L724.9 456.0L721.1 460.4L722.9 461.6L724.3 464.0L724.5 467.0L723.9 470.0L722.3 472.0L722.5 473.6L723.1 476.4L722.5 479.4L721.5 481.2L733.9 482.4L739.5 484.8L741.9 488.4L742.7 493.7L741.9 499.0L739.5 503.6L733.9 507.6L725.9 510.6L720.5 512.8L719.5 520.0L719.4 529.5L721.3 540.0L724.4 554.7L727.3 570.0L729.9 586.3L730.3 594.0L730.5 596.6L736.5 597.6L738.3 600.0L738.5 604.4L737.5 607.4L737.9 609.4L739.3 612.0L742.3 615.8L746.3 618.0L750.9 620.4L755.9 624.0L760.5 628.0L763.3 632.0L764.9 636.0L765.8 640.0L766.0 645.0L765.5 650.0L764.5 654.0L762.9 658.0L760.9 661.4L759.3 663.4L758.7 665.0L758.7 675.0L757.9 684.0L756.3 689.0L753.3 693.3L748.5 696.6L741.9 699.4L733.9 702.0L724.9 704.0L711.9 706.0L693.9 707.0L693.9 707.0L675.9 706.0L662.9 704.0L653.9 702.0L645.9 699.4L639.3 696.6L634.5 693.3L631.5 689.0L629.9 684.0L629.1 675.0L629.1 665.0L628.5 663.4L626.9 661.4L624.9 658.0L623.3 654.0L622.3 650.0L621.8 645.0L622.0 640.0L622.9 636.0L624.5 632.0L627.3 628.0L631.9 624.0L636.9 620.4L641.5 618.0L645.5 615.8L648.5 612.0L649.9 609.4L650.3 607.4L649.3 604.4L649.5 600.0L651.3 597.6L657.3 596.6L657.5 594.0L657.9 586.3L660.5 570.0L663.4 554.7L666.5 540.0L668.4 529.5L668.3 520.0L667.3 512.8L661.9 510.6L653.9 507.6L648.3 503.6L645.9 499.0L645.1 493.7L645.9 488.4L648.3 484.8L653.9 482.4L666.3 481.2L665.3 479.4L664.7 476.4L665.3 473.6L665.5 472.0L663.9 470.0L663.3 467.0L663.5 464.0L664.9 461.6L666.7 460.4L662.9 456.0L658.9 450.3L655.1 442.0L652.9 434.4L651.9 427.0L651.5 420.5L651.9 414.5L653.1 407.0L655.5 400.0L658.3 394.6L661.9 390.0L666.9 384.7L672.9 380.0L679.1 374.8L683.9 370.0L685.5 367.6L685.1 365.4L682.7 363.0L679.3 360.5L678.3 357.0L678.5 351.0L680.3 348.6L684.9 347.4L693.9 347.2Z" fill="#000" fill-opacity="0.27" filter="url(#shblur)"/>
<defs><linearGradient id="bv" gradientUnits="userSpaceOnUse" x1="0" y1="347.0" x2="0" y2="707.0"><stop offset="0.0000" stop-color="#7ea5a7"/><stop offset="0.0250" stop-color="#6f9699"/><stop offset="0.0417" stop-color="#5a7d80"/><stop offset="0.0528" stop-color="#6a9093"/><stop offset="0.0694" stop-color="#7ba3a5"/><stop offset="0.1333" stop-color="#82abad"/><stop offset="0.2028" stop-color="#7ca5a7"/><stop offset="0.2472" stop-color="#769ea1"/><stop offset="0.2556" stop-color="#678c8f"/><stop offset="0.2917" stop-color="#5f8487"/><stop offset="0.3153" stop-color="#587b7e"/><stop offset="0.3194" stop-color="#7ea7a9"/><stop offset="0.3306" stop-color="#80a9ab"/><stop offset="0.3444" stop-color="#618588"/><stop offset="0.3514" stop-color="#7da6a8"/><stop offset="0.3639" stop-color="#7aa2a4"/><stop offset="0.3736" stop-color="#5f8386"/><stop offset="0.3778" stop-color="#7ea7a9"/><stop offset="0.4028" stop-color="#7ba3a5"/><stop offset="0.4139" stop-color="#6a9093"/><stop offset="0.4250" stop-color="#4c6b6e"/><stop offset="0.4556" stop-color="#3c5557"/><stop offset="0.4667" stop-color="#4c6b6e"/><stop offset="0.4917" stop-color="#6d9396"/><stop offset="0.5139" stop-color="#7ca5a7"/><stop offset="0.5917" stop-color="#7fa8aa"/><stop offset="0.6694" stop-color="#769ea1"/><stop offset="0.6917" stop-color="#618689"/><stop offset="0.6972" stop-color="#78a0a2"/><stop offset="0.7111" stop-color="#7aa2a4"/><stop offset="0.7222" stop-color="#5c7f82"/><stop offset="0.7278" stop-color="#6f979a"/><stop offset="0.7444" stop-color="#769ea1"/><stop offset="0.7861" stop-color="#7da6a8"/><stop offset="0.8167" stop-color="#84adaf"/><stop offset="0.8417" stop-color="#7ba3a5"/><stop offset="0.8500" stop-color="#6c9295"/><stop offset="0.8750" stop-color="#618689"/><stop offset="0.8806" stop-color="#557779"/><stop offset="0.8861" stop-color="#78a0a2"/><stop offset="0.9139" stop-color="#80a9ab"/><stop offset="0.9472" stop-color="#78a0a2"/><stop offset="0.9750" stop-color="#618689"/><stop offset="0.9917" stop-color="#4f7072"/><stop offset="1.0000" stop-color="#4a696b"/></linearGradient>
<linearGradient id="bh" gradientUnits="userSpaceOnUse" x1="629.9" y1="0" x2="773.9" y2="0">
<stop offset="0" stop-color="#1d3033" stop-opacity="0.20"/><stop offset="0.2" stop-color="#1d3033" stop-opacity="0.06"/>
<stop offset="0.5" stop-color="#fff" stop-opacity="0.05"/><stop offset="0.62" stop-color="#fff" stop-opacity="0.07"/>
<stop offset="0.84" stop-color="#1d3033" stop-opacity="0.05"/><stop offset="1" stop-color="#1d3033" stop-opacity="0.17"/></linearGradient></defs>
<g filter="url(#bblur)"><path d="M701.9 347.2L710.9 347.4L715.5 348.6L717.3 351.0L717.5 357.0L716.5 360.5L713.1 363.0L710.7 365.4L710.3 367.6L711.9 370.0L716.7 374.8L722.9 380.0L728.9 384.7L733.9 390.0L737.5 394.6L740.3 400.0L742.7 407.0L743.9 414.5L744.3 420.5L743.9 427.0L742.9 434.4L740.7 442.0L736.9 450.3L732.9 456.0L729.1 460.4L730.9 461.6L732.3 464.0L732.5 467.0L731.9 470.0L730.3 472.0L730.5 473.6L731.1 476.4L730.5 479.4L729.5 481.2L741.9 482.4L747.5 484.8L749.9 488.4L750.7 493.7L749.9 499.0L747.5 503.6L741.9 507.6L733.9 510.6L728.5 512.8L727.5 520.0L727.4 529.5L729.3 540.0L732.4 554.7L735.3 570.0L737.9 586.3L738.3 594.0L738.5 596.6L744.5 597.6L746.3 600.0L746.5 604.4L745.5 607.4L745.9 609.4L747.3 612.0L750.3 615.8L754.3 618.0L758.9 620.4L763.9 624.0L768.5 628.0L771.3 632.0L772.9 636.0L773.8 640.0L774.0 645.0L773.5 650.0L772.5 654.0L770.9 658.0L768.9 661.4L767.3 663.4L766.7 665.0L766.7 675.0L765.9 684.0L764.3 689.0L761.3 693.3L756.5 696.6L749.9 699.4L741.9 702.0L732.9 704.0L719.9 706.0L701.9 707.0L701.9 707.0L683.9 706.0L670.9 704.0L661.9 702.0L653.9 699.4L647.3 696.6L642.5 693.3L639.5 689.0L637.9 684.0L637.1 675.0L637.1 665.0L636.5 663.4L634.9 661.4L632.9 658.0L631.3 654.0L630.3 650.0L629.8 645.0L630.0 640.0L630.9 636.0L632.5 632.0L635.3 628.0L639.9 624.0L644.9 620.4L649.5 618.0L653.5 615.8L656.5 612.0L657.9 609.4L658.3 607.4L657.3 604.4L657.5 600.0L659.3 597.6L665.3 596.6L665.5 594.0L665.9 586.3L668.5 570.0L671.4 554.7L674.5 540.0L676.4 529.5L676.3 520.0L675.3 512.8L669.9 510.6L661.9 507.6L656.3 503.6L653.9 499.0L653.1 493.7L653.9 488.4L656.3 484.8L661.9 482.4L674.3 481.2L673.3 479.4L672.7 476.4L673.3 473.6L673.5 472.0L671.9 470.0L671.3 467.0L671.5 464.0L672.9 461.6L674.7 460.4L670.9 456.0L666.9 450.3L663.1 442.0L660.9 434.4L659.9 427.0L659.5 420.5L659.9 414.5L661.1 407.0L663.5 400.0L666.3 394.6L669.9 390.0L674.9 384.7L680.9 380.0L687.1 374.8L691.9 370.0L693.5 367.6L693.1 365.4L690.7 363.0L687.3 360.5L686.3 357.0L686.5 351.0L688.3 348.6L692.9 347.4L701.9 347.2Z" fill="url(#bv)"/><path d="M701.9 347.2L710.9 347.4L715.5 348.6L717.3 351.0L717.5 357.0L716.5 360.5L713.1 363.0L710.7 365.4L710.3 367.6L711.9 370.0L716.7 374.8L722.9 380.0L728.9 384.7L733.9 390.0L737.5 394.6L740.3 400.0L742.7 407.0L743.9 414.5L744.3 420.5L743.9 427.0L742.9 434.4L740.7 442.0L736.9 450.3L732.9 456.0L729.1 460.4L730.9 461.6L732.3 464.0L732.5 467.0L731.9 470.0L730.3 472.0L730.5 473.6L731.1 476.4L730.5 479.4L729.5 481.2L741.9 482.4L747.5 484.8L749.9 488.4L750.7 493.7L749.9 499.0L747.5 503.6L741.9 507.6L733.9 510.6L728.5 512.8L727.5 520.0L727.4 529.5L729.3 540.0L732.4 554.7L735.3 570.0L737.9 586.3L738.3 594.0L738.5 596.6L744.5 597.6L746.3 600.0L746.5 604.4L745.5 607.4L745.9 609.4L747.3 612.0L750.3 615.8L754.3 618.0L758.9 620.4L763.9 624.0L768.5 628.0L771.3 632.0L772.9 636.0L773.8 640.0L774.0 645.0L773.5 650.0L772.5 654.0L770.9 658.0L768.9 661.4L767.3 663.4L766.7 665.0L766.7 675.0L765.9 684.0L764.3 689.0L761.3 693.3L756.5 696.6L749.9 699.4L741.9 702.0L732.9 704.0L719.9 706.0L701.9 707.0L701.9 707.0L683.9 706.0L670.9 704.0L661.9 702.0L653.9 699.4L647.3 696.6L642.5 693.3L639.5 689.0L637.9 684.0L637.1 675.0L637.1 665.0L636.5 663.4L634.9 661.4L632.9 658.0L631.3 654.0L630.3 650.0L629.8 645.0L630.0 640.0L630.9 636.0L632.5 632.0L635.3 628.0L639.9 624.0L644.9 620.4L649.5 618.0L653.5 615.8L656.5 612.0L657.9 609.4L658.3 607.4L657.3 604.4L657.5 600.0L659.3 597.6L665.3 596.6L665.5 594.0L665.9 586.3L668.5 570.0L671.4 554.7L674.5 540.0L676.4 529.5L676.3 520.0L675.3 512.8L669.9 510.6L661.9 507.6L656.3 503.6L653.9 499.0L653.1 493.7L653.9 488.4L656.3 484.8L661.9 482.4L674.3 481.2L673.3 479.4L672.7 476.4L673.3 473.6L673.5 472.0L671.9 470.0L671.3 467.0L671.5 464.0L672.9 461.6L674.7 460.4L670.9 456.0L666.9 450.3L663.1 442.0L660.9 434.4L659.9 427.0L659.5 420.5L659.9 414.5L661.1 407.0L663.5 400.0L666.3 394.6L669.9 390.0L674.9 384.7L680.9 380.0L687.1 374.8L691.9 370.0L693.5 367.6L693.1 365.4L690.7 363.0L687.3 360.5L686.3 357.0L686.5 351.0L688.3 348.6L692.9 347.4L701.9 347.2Z" fill="url(#bh)"/></g>
<g><g fill="#33494c" fill-opacity="0.8" transform="translate(1.1,0.7)">
<path d="M699.4 514.4L704.6 521.4H694.2Z M699.4 544.6L704.6 537.6H694.2Z M685 529.5L692 524.3V534.7Z M713.8 529.5L706.8 524.3V534.7Z"/></g>
<g fill="#adadad"><path d="M699.4 515L704.4 521.8H700.6V528.3H707V524.5L713.6 529.5L707 534.5V530.7H700.6V537.2H704.4L699.4 544L694.4 537.2H698.2V530.7H691.8V534.5L685.2 529.5L691.8 524.5V528.3H698.2V521.8H694.4Z"/></g></g>
</svg>
</div>
<div class="abs" style="left:334px;top:193.6px;width:45.4px;height:40.6px;border-radius:50%;background:#fff;border:1.3px solid #cfcfcf;clip-path:inset(0 0 0 24.4px);"></div>
<svg style="left:358px;top:200px" width="20" height="26" viewBox="358 200 20 26"><path d="M371 206.4L362.4 213.4L371 220.4" fill="none" stroke="#6e6e6e" stroke-width="1.9"/></svg>
<div id="labels">
<span class="t" style="left:51.00px;top:11.69px;font-size:26px;color:#7d7d7d;letter-spacing:-1.167px;">SelfCAD</span>
<span class="t" style="left:169.00px;top:13.08px;font-size:19.4px;color:#808080;letter-spacing:-0.667px;">File</span>
<span class="t" style="left:250.75px;top:13.08px;font-size:19.4px;color:#808080;letter-spacing:-0.083px;">Edit</span>
<span class="t" style="left:336.00px;top:13.08px;font-size:19.4px;color:#808080;letter-spacing:-0.333px;">View</span>
<span class="t" style="left:428.75px;top:13.08px;font-size:19.4px;color:#808080;letter-spacing:-0.036px;">Settings</span>
<span class="t" style="left:537.50px;top:11.88px;font-size:19.4px;color:#808080;letter-spacing:0.472px;">Untitled-3</span>
<span class="t" style="left:645.50px;top:11.88px;font-size:19.4px;color:#808080;letter-spacing:0.327px;">Auto-save in about 1 minute</span>
<span class="t" style="left:652.50px;top:91.92px;font-size:18.4px;color:#808080;letter-spacing:0.300px;">Sketch tool</span>
<span class="t" style="left:1.00px;top:165.69px;font-size:18.2px;color:#9cc0e4;letter-spacing:-0.700px;">3D Shapes</span>
<span class="t" style="left:124.80px;top:165.69px;font-size:18.2px;color:#9cc0e4;letter-spacing:0.033px;">Drawing</span>
<span class="t" style="left:230.70px;top:165.29px;font-size:18.2px;color:#9cc0e4;letter-spacing:-0.233px;">Move</span>
<span class="t" style="left:300.70px;top:165.29px;font-size:18.2px;color:#9cc0e4;letter-spacing:-0.280px;">Rotate</span>
<span class="t" style="left:378.60px;top:165.29px;font-size:18.2px;color:#9cc0e4;letter-spacing:-1.000px;">Scale</span>
<span class="t" style="left:446.60px;top:165.69px;font-size:18.2px;color:#9cc0e4;letter-spacing:0.280px;">Deform</span>
<span class="t" style="left:546.60px;top:165.69px;font-size:18.2px;color:#9cc0e4;letter-spacing:0.280px;">Modify</span>
<span class="t" style="left:640.80px;top:165.29px;font-size:18.2px;color:#808080;letter-spacing:-0.292px;">Stitch &amp; Scoop</span>
<span class="t" style="left:782.90px;top:165.69px;font-size:18.2px;color:#9cc0e4;letter-spacing:0.025px;">Tools</span>
<span class="t" style="left:864.30px;top:165.69px;font-size:18.2px;color:#9cc0e4;letter-spacing:0.088px;">Utilities</span>
<span class="t" style="left:9.50px;top:205.45px;font-size:16.6px;color:#808080;letter-spacing:-0.208px;">Revolve (T+V)</span>
<span class="t" style="left:15.50px;top:243.27px;font-size:17.4px;color:#808080;letter-spacing:0.000px;">Angle</span>
<span class="t" style="left:15.50px;top:296.27px;font-size:17.4px;color:#808080;letter-spacing:0.036px;">Segments</span>
<span class="t" style="left:278.90px;top:244.94px;font-size:17.2px;color:#6a6a6a;letter-spacing:-0.350px;">360</span>
<span class="t" style="left:278.50px;top:297.94px;font-size:17.2px;color:#6a6a6a;letter-spacing:-0.250px;">100</span>
<span class="t" style="left:43.50px;top:349.52px;font-size:17.4px;color:#9cc0e4;letter-spacing:0.273px;">Flip Normals</span>
<span class="t" style="left:43.50px;top:399.52px;font-size:17.4px;color:#808080;letter-spacing:0.233px;">Hide All Objects</span>
<span class="t" style="left:103.70px;top:459.24px;font-size:14.6px;color:#9cc0e4;letter-spacing:0.217px;">Revolve Around Edge</span>
<span class="t" style="left:9.50px;top:510.35px;font-size:16.6px;color:#808080;letter-spacing:0.350px;">Reference Image</span>
<span class="t" style="left:148.20px;top:606.29px;font-size:18.2px;color:#808080;letter-spacing:0.267px;">Tooltip</span>
<span class="t" style="left:120.80px;top:631.59px;font-size:18.2px;color:#808080;letter-spacing:0.055px;">Video Player</span>
<span class="t" style="left:51.60px;top:841.63px;font-size:13.9px;color:#ffffff;letter-spacing:-0.150px;font-weight:bold;">00:00</span>
<span class="t" style="left:217.00px;top:841.63px;font-size:13.9px;color:#ffffff;letter-spacing:-0.125px;font-weight:bold;">00:00</span>
<span class="t" style="left:398.00px;top:317.76px;font-size:8.2px;color:#bdbdbd;letter-spacing:-0.200px;">TOP</span>
<span class="t" style="left:994.70px;top:773.56px;font-size:18.6px;color:#7fa96c;letter-spacing:-1.000px;">Y</span>
</div>
<div id="clipline"><span class="t" style="left:396.40px;top:66.12px;font-size:18.4px;color:#808080;letter-spacing:0.335px;">Not happy with the result? Try creating a profile using spline mode from 3D</span></div>
<div id="cliptb"><span class="t" style="left:964.00px;top:165.29px;font-size:18.2px;color:#808080;letter-spacing:0.000px;">Sculpting</span></div>
</div>
</body></html>
